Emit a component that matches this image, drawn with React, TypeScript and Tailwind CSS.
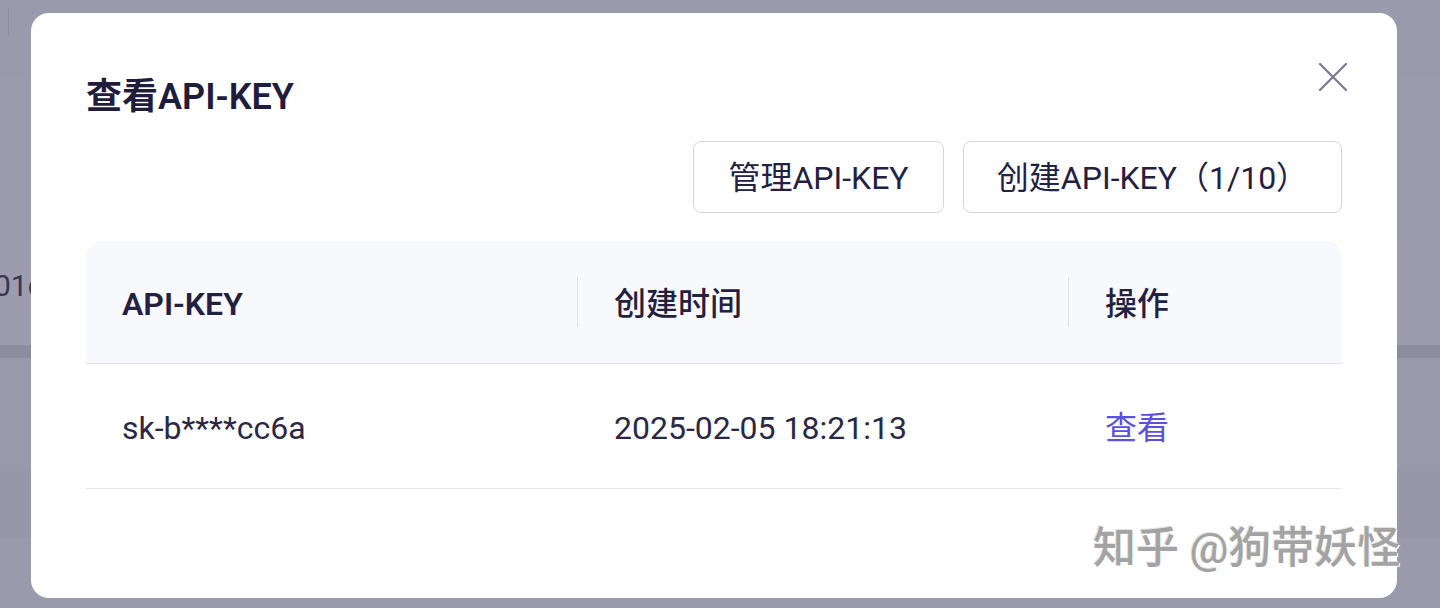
import React from "react";

const rows = [
  { key: "sk-b****cc6a", createdAt: "2025-02-05 18:21:13" },
];

function CloseIcon() {
  return (
    <svg width="30" height="30" viewBox="0 0 30 30" fill="none">
      <path d="M2 2 28 28M28 2 2 28" stroke="#7b798f" strokeWidth="2.2" strokeLinecap="round" />
    </svg>
  );
}

export default function App() {
  return (
    <div className="relative h-[608px] w-full overflow-hidden bg-[#9b9aac] font-['Roboto','Noto_Sans_CJK_SC',sans-serif]">
      {/* dimmed page underneath */}
      <div className="flex flex-col">
        <div className="h-[78px] pl-2 pt-2">
          <div className="h-[27px] w-px bg-[#8f8ea1]" />
        </div>
        <div className="h-[162px] bg-[#9c9bad]" />
        <div className="flex h-[105px] items-center bg-[#9d9cae] pb-[14px] text-[30px] text-[#3a3850]">
          <span className="-ml-[6px]">01c</span>
        </div>
        <div className="h-[13px] bg-[#8e8da0]" />
        <div className="h-[110px] bg-[#9a99ab]" />
        <div className="h-[70px] bg-[#9897a9]" />
        <div className="h-[70px] bg-[#9b9aac]" />
      </div>

      {/* modal */}
      <div className="absolute left-[31px] top-[13px] h-[585px] w-[1366px] rounded-[18px] bg-white px-[55px] pt-[59px] text-[#23213f]">
        <button className="absolute right-[49px] top-[49px]">
          <CloseIcon />
        </button>

        <h2 className="text-[36px] font-semibold leading-[50px] text-[#1f1d3b]">查看API-KEY</h2>

        <div className="mt-[19px] flex justify-end gap-[19px]">
          <button className="h-[72px] w-[251px] rounded-[8px] border border-[#d6d6df] pt-[2px] text-[32px] text-[#23213f]">
            管理API-KEY
          </button>
          <button className="h-[72px] w-[379px] rounded-[8px] border border-[#d6d6df] pt-[2px] text-[32px] text-[#23213f]">
            创建API-KEY（1/10）
          </button>
        </div>

        <div className="mt-[28px] w-[1256px]">
          <div className="flex h-[123px] items-center rounded-t-[16px] border-b border-[#e3e3e9] bg-[#f8f9fc] text-[32px] font-semibold text-[#23213f]">
            <div className="w-[491px] pl-[36px] pt-[4px]">API-KEY</div>
            <div className="h-[50px] w-px bg-[#e0e0e7]" />
            <div className="w-[490px] pl-[36px] pt-[4px] font-medium">创建时间</div>
            <div className="h-[50px] w-px bg-[#e0e0e7]" />
            <div className="flex-1 pl-[36px] pt-[4px] font-medium">操作</div>
          </div>
          {rows.map((r) => (
            <div key={r.key} className="flex h-[125px] items-center border-b border-[#e3e3e9] pt-[4px] text-[32px] text-[#2a2845]">
              <div className="w-[491px] pl-[36px]">{r.key}</div>
              <div className="w-[491px] pl-[37px]">{r.createdAt}</div>
              <div className="flex-1 pl-[37px]">
                <a className="cursor-pointer text-[#5a4fdf]">查看</a>
              </div>
            </div>
          ))}
        </div>
      </div>

      {/* watermark */}
      <div className="absolute left-[1093px] top-[521px] text-[43px] font-medium leading-[54px] text-[#a3a3a3] [text-shadow:1px_1px_0_#ffffff,-1px_-1px_0_#e2e2e2]">
        知乎 @狗带妖怪
      </div>
    </div>
  );
}
